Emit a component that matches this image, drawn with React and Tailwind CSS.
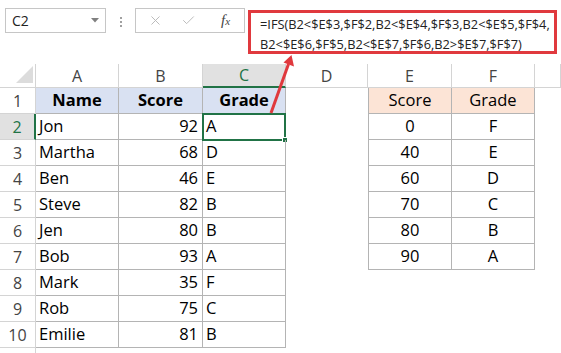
import { X, Check } from "lucide-react"

const names = [
  ["Jon", 92, "A"],
  ["Martha", 68, "D"],
  ["Ben", 46, "E"],
  ["Steve", 82, "B"],
  ["Jen", 80, "B"],
  ["Bob", 93, "A"],
  ["Mark", 35, "F"],
  ["Rob", 75, "C"],
  ["Emilie", 81, "B"],
]

const lookup = [
  [0, "F"],
  [40, "E"],
  [60, "D"],
  [70, "C"],
  [80, "B"],
  [90, "A"],
]

const letters = ["A", "B", "C", "D", "E", "F", ""]

// table cell borders
const tb = "border-r border-b border-[#b4b4b4]"

function ColHeaders() {
  return (
    <>
      <div className="relative border-r border-b border-[#d4d4d4] bg-white">
        <svg className="absolute left-[16px] top-[2px]" width="18" height="18" viewBox="0 0 18 18">
          <polygon points="17,0 17,17 0,17" fill="#dcdcdc" />
        </svg>
      </div>
      {letters.map((l, i) => (
        <div
          key={i}
          className={
            l === "C"
              ? "flex items-center justify-center bg-[#e1e1e1] text-[#217346] border-r border-[#d4d4d4] border-b-2 border-b-[#217346] text-[16px]"
              : "flex items-center justify-center border-r border-b border-[#d4d4d4] text-[#444] text-[16px]"
          }
        >
          {l}
        </div>
      ))}
    </>
  )
}

function RowHeader({ n }) {
  const sel = n === 2
  return (
    <div
      className={
        sel
          ? "flex items-center justify-center bg-[#e1e1e1] text-[#217346] border-r-2 border-r-[#217346] border-b border-b-[#d4d4d4] text-[16px]"
          : "flex items-center justify-center border-r border-b border-[#d4d4d4] text-[#444] text-[16px]"
      }
    >
      {n}
    </div>
  )
}

export default function App() {
  return (
    <div className="relative w-[561px] h-[353px] overflow-hidden bg-white text-black font-['Open_Sans',sans-serif]">
      {/* formula bar */}
      <div className="h-[64px] flex items-start pt-[8px] pl-[5px]">
        <div className="w-[101px] h-[25px] border border-[#c6c6c6] flex items-center justify-between pl-[6px] pr-[6px]">
          <span className="text-[14px] text-[#222]">C2</span>
          <svg width="8" height="5" viewBox="0 0 8 5">
            <polygon points="0,0 8,0 4,4.5" fill="#808080" />
          </svg>
        </div>
        <div className="ml-[14px] mt-[9px] flex flex-col gap-[2px]">
          <div className="w-[2px] h-[2px] bg-[#a0a0a0]" />
          <div className="w-[2px] h-[2px] bg-[#a0a0a0]" />
          <div className="w-[2px] h-[2px] bg-[#a0a0a0]" />
        </div>
        <div className="ml-[13px] w-[110px] h-[25px] border border-[#c6c6c6] flex items-center pl-[12px]">
          <X size={15} strokeWidth={1.5} color="#b8b8b8" />
          <Check size={15} strokeWidth={1.5} color="#b8b8b8" className="ml-[18px]" />
          <span className="ml-[25px] italic text-[#444] font-['Liberation_Serif',serif] text-[15px] leading-none">
            f<span className="text-[11px]">x</span>
          </span>
        </div>
        <div className="ml-[3px] mt-[2px] w-[309px] h-[44px] border-[3px] border-[#e0393e] bg-white pl-[9px] pt-[1px] text-[12.8px] leading-[20px] text-[#222] whitespace-nowrap">
          <div>=IFS(B2&lt;$E$3,$F$2,B2&lt;$E$4,$F$3,B2&lt;$E$5,$F$4,</div>
          <div>B2&lt;$E$6,$F$5,B2&lt;$E$7,$F$6,B2&gt;$E$7,$F$7)</div>
        </div>
      </div>

      {/* sheet */}
      <div className="grid grid-cols-[36px_83px_84px_83px_82px_84px_83px_26px] grid-rows-[24px_repeat(10,26px)_5px] text-[16.5px]">
        <ColHeaders />

        {/* row 1 */}
        <RowHeader n={1} />
        <div className={`${tb} bg-[#d9e1f2] font-bold flex items-center justify-center`}>Name</div>
        <div className={`${tb} bg-[#d9e1f2] font-bold flex items-center justify-center`}>Score</div>
        <div className={`${tb} bg-[#d9e1f2] font-bold flex items-center justify-center`}>Grade</div>
        <div />
        <div className={`${tb} border-l bg-[#fce4d6] flex items-center justify-center`}>Score</div>
        <div className={`${tb} bg-[#fce4d6] flex items-center justify-center`}>Grade</div>
        <div />

        {names.map((r, i) => {
          const n = i + 2
          const lk = lookup[i]
          return (
            <div key={n} className="contents">
              <RowHeader n={n} />
              <div className={`${tb} flex items-center px-[3px]`}>{r[0]}</div>
              <div className={`${tb} flex items-center justify-end px-[4px]`}>{r[1]}</div>
              <div className={`${tb} relative flex items-center px-[3px]`}>
                {r[2]}
                {n === 2 && (
                  <div className="absolute -left-[1px] -top-[1px] w-[84px] h-[28px] border-2 border-[#217346]">
                    <div className="absolute -right-[4px] -bottom-[4px] w-[6px] h-[6px] bg-[#217346] border border-white" />
                  </div>
                )}
              </div>
              <div />
              {lk ? (
                <>
                  <div className={`${tb} border-l flex items-center justify-center`}>{lk[0]}</div>
                  <div className={`${tb} flex items-center justify-center`}>{lk[1]}</div>
                </>
              ) : (
                <>
                  <div />
                  <div />
                </>
              )}
              <div />
            </div>
          )
        })}

        <div className="border-r border-[#d4d4d4]" />
      </div>

      {/* annotation arrow */}
      <svg className="absolute left-0 top-0 pointer-events-none" width="561" height="353">
        <line x1="271" y1="113" x2="288.5" y2="64" stroke="#e0393e" strokeWidth="3" />
        <polygon points="291.5,55 294,66.5 283.5,62.5" fill="#e0393e" />
      </svg>
    </div>
  )
}
